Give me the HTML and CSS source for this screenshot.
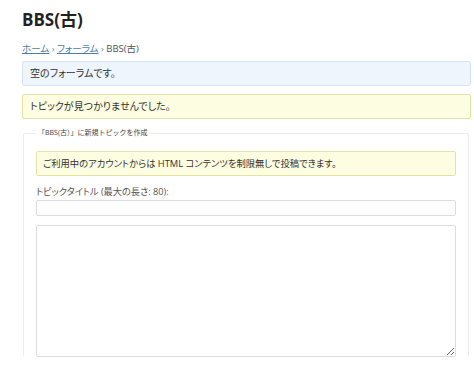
FILE: index.html
```html
<!DOCTYPE html>
<html>
<head>
    <link rel="stylesheet" href="styles.css">
</head>
<body>
    <div id="page">
        <h1 class="title">BBS(古)</h1>
        <div class="breadcrumb">
            <a href="#">ホーム</a> <span class="sep">›</span> <a href="#">フォーラム</a> <span class="sep">›</span> BBS(古)
        </div>
        <div class="box info">空のフォーラムです。</div>
        <div class="box warn">トピックが見つかりませんでした。</div>

        <fieldset class="new-topic">
            <legend>「BBS(古）」に新規トピックを作成</legend>
            <div class="box warn inner">ご利用中のアカウントからは HTML コンテンツを制限無しで投稿できます。</div>
            <label class="field-label" for="topicTitle">トピックタイトル (最大の長さ: 80):</label>
            <input id="topicTitle" class="field" type="text">
            <textarea class="field body-text"></textarea>
        </fieldset>
    </div>
</body>
</html>
```

FILE: styles.css
```css
body {
    margin: 0;
    background-color: white;
    color: #333;
    font-family: "Open Sans", "Noto Sans CJK JP", sans-serif;
    font-feature-settings: "palt";
}

#page {
    padding: 9px 3px 0 22px;
}

.title {
    margin: 0;
    font-size: 17px;
    line-height: 22px;
    font-weight: bold;
    color: #222;
}

.breadcrumb {
    margin-top: 11px;
    font-size: 9.5px;
    line-height: 14px;
    color: #555;
}

.breadcrumb a {
    color: #4d7eab;
}

.sep {
    color: #888;
}

.box {
    height: 23px;
    line-height: 23px;
    padding: 0 7px;
    font-size: 10px;
    border: 1px solid;
    border-radius: 2px;
}

.info {
    margin-top: 5px;
    background-color: #eef5fc;
    border-color: #d6e4f2;
}

.warn {
    margin-top: 8px;
    background-color: #fdfde1;
    border-color: #e5e2a8;
}

.new-topic {
    margin: 9px 2px 0 1px;
    padding: 0 12px 0 12px;
    border: 1px solid #ececec;
    border-bottom: none;
    border-radius: 2px;
}

.new-topic legend {
    margin-left: 0;
    padding: 0 2px;
    font-size: 7px;
    line-height: 10px;
    color: #444;
    font-feature-settings: normal;
}

.inner {
    margin-top: 13px;
    padding: 0 6px;
    font-size: 9.3px;
}

.field-label {
    display: block;
    margin-top: 9px;
    font-size: 9.2px;
    line-height: 14px;
    color: #555;
}

.field {
    display: block;
    box-sizing: border-box;
    width: 100%;
    margin: 0;
    border: 1px solid #dcdcdc;
    border-radius: 2px;
    background-color: white;
}

#topicTitle {
    height: 16px;
    margin-top: 1px;
}

.body-text {
    height: 132px;
    margin-top: 9px;
}
```
